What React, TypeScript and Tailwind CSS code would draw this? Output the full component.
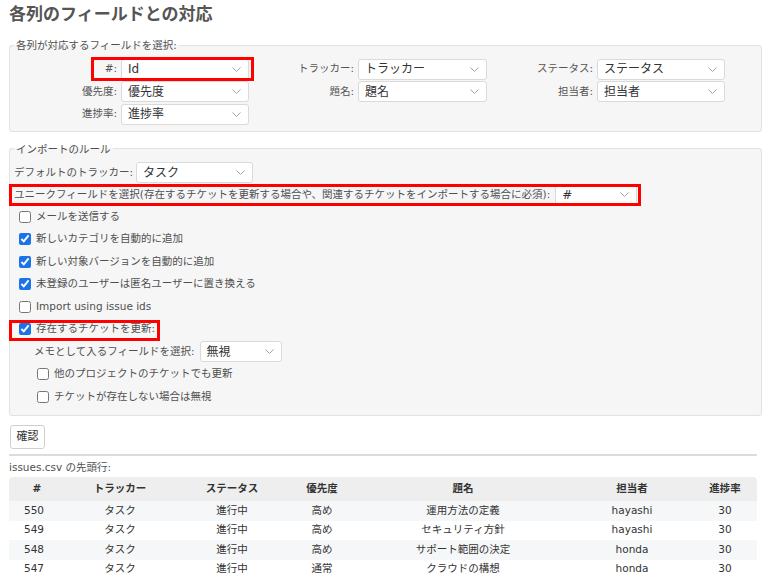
import React from 'react';

const font = '"DejaVu Sans", "Noto Sans CJK JP", sans-serif';

function Chevron() {
  return (
    <svg width="9" height="5" viewBox="0 0 9 5" className="shrink-0">
      <path d="M0.5 0.5 L4.5 4.5 L8.5 0.5" fill="none" stroke="#a3a3a3" strokeWidth="1" />
    </svg>
  );
}

function Select({ value, width }: { value: string; width: string }) {
  return (
    <div
      className={`flex h-[21px] items-center justify-between rounded-[3px] border border-[#dadada] bg-white pl-[6px] pr-[7px] text-[12px] text-[#333] ${width}`}
    >
      <span>{value}</span>
      <Chevron />
    </div>
  );
}

// 赤枠（注釈）
function RedBox({ className }: { className: string }) {
  return <div className={`pointer-events-none absolute border-[3px] border-[#f00] ${className}`} />;
}

function Label({ children }: { children: React.ReactNode }) {
  return <div className="pr-[4px] text-right text-[10.5px] text-[#555]">{children}</div>;
}

function Check({ label, checked }: { label: string; checked?: boolean }) {
  return (
    <label className="flex items-center">
      <input type="checkbox" defaultChecked={checked} className="h-[12px] w-[12px] accent-[#1a73e8]" />
      <span className="ml-[5px]">{label}</span>
    </label>
  );
}

const rows = [
  ['550', 'タスク', '進行中', '高め', '運用方法の定義', 'hayashi', '30'],
  ['549', 'タスク', '進行中', '高め', 'セキュリティ方針', 'hayashi', '30'],
  ['548', 'タスク', '進行中', '高め', 'サポート範囲の決定', 'honda', '30'],
  ['547', 'タスク', '進行中', '通常', 'クラウドの構想', 'honda', '30'],
];

export default function App() {
  return (
    <div className="min-h-[577px] bg-white pl-[9px] pr-[6px] text-[10.5px] text-[#505050]" style={{ fontFamily: font }}>
      <h2 className="pt-[3px] text-[17px] font-bold leading-[22px] text-[#555]">各列のフィールドとの対応</h2>

      {/* フィールド対応 */}
      <fieldset className="mt-[13px] rounded-[3px] border border-[#e2e2e2] bg-[#f6f6f6]">
        <legend className="ml-[4px] px-[2px] leading-[14px] text-[#505050]">各列が対応するフィールドを選択:</legend>
        <div className="grid grid-cols-[111px_128px_109px_129px_110px_128px] auto-rows-[22.5px] items-center pt-[6px] pb-[5px]">
          <Label>#:</Label>
          <div className="relative">
            <Select value="Id" width="w-[128px]" />
            <RedBox className="-left-[30px] -right-[5px] -top-[2px] -bottom-[1px]" />
          </div>
          <Label>トラッカー:</Label>
          <Select value="トラッカー" width="w-[129px]" />
          <Label>ステータス:</Label>
          <Select value="ステータス" width="w-[128px]" />

          <Label>優先度:</Label>
          <Select value="優先度" width="w-[128px]" />
          <Label>題名:</Label>
          <Select value="題名" width="w-[129px]" />
          <Label>担当者:</Label>
          <Select value="担当者" width="w-[128px]" />

          <Label>進捗率:</Label>
          <Select value="進捗率" width="w-[128px]" />
        </div>
      </fieldset>

      {/* インポートのルール */}
      <fieldset className="mt-[10px] rounded-[3px] border border-[#e2e2e2] bg-[#f6f6f6]">
        <legend className="ml-[4px] px-[2px] leading-[14px] text-[#505050]">インポートのルール</legend>
        <div className="pl-[4px] pt-[6px] pb-[7px]">
          <div className="flex h-[22px] items-center gap-[3px]">
            <span>デフォルトのトラッカー:</span>
            <Select value="タスク" width="w-[117px]" />
          </div>
          <div className="flex h-[22px] items-center">
            <div className="relative flex h-[22px] items-center gap-[5px]">
              <span>ユニークフィールドを選択(存在するチケットを更新する場合や、関連するチケットをインポートする場合に必須):</span>
              <Select value="#" width="w-[82px]" />
              <RedBox className="-left-[5px] -right-[4px] top-0 bottom-0" />
            </div>
          </div>

          <div className="flex flex-col pl-[5px] [&>*]:h-[22.5px]">
            <Check label="メールを送信する" />
            <Check label="新しいカテゴリを自動的に追加" checked />
            <Check label="新しい対象バージョンを自動的に追加" checked />
            <Check label="未登録のユーザーは匿名ユーザーに置き換える" checked />
            <Check label="Import using issue ids" />
            <div className="flex items-center">
              <div className="relative flex h-full items-center pr-[2px]">
                <Check label="存在するチケットを更新:" checked />
                <RedBox className="-left-[10px] -right-[3px] top-[1.5px] bottom-0" />
              </div>
            </div>
            <div className="flex items-center gap-[5px] pl-[15px]">
              <span>メモとして入るフィールドを選択:</span>
              <Select value="無視" width="w-[82px]" />
            </div>
            <div className="flex items-center pl-[18px]">
              <Check label="他のプロジェクトのチケットでも更新" />
            </div>
            <div className="flex items-center pl-[18px]">
              <Check label="チケットが存在しない場合は無視" />
            </div>
          </div>
        </div>
      </fieldset>

      <button className="ml-[1px] mt-[9px] h-[24px] w-[35px] rounded-[3px] border border-[#cfcfcf] bg-white text-[11px] text-[#333]">
        確認
      </button>

      <hr className="mt-[5px] mr-[5px] border-t-2 border-[#dcdcdc]" />

      <p className="mt-[4px] leading-[14px]">issues.csv の先頭行:</p>

      <div className="mt-[3px] w-[748px] overflow-hidden rounded-t-[4px]">
        <table className="w-full table-fixed border-collapse text-[10.5px] text-[#333]">
          <colgroup>
            <col className="w-[56px]" />
            <col className="w-[110px]" />
            <col className="w-[114px]" />
            <col className="w-[66px]" />
            <col className="w-[216px]" />
            <col className="w-[122px]" />
            <col className="w-[64px]" />
          </colgroup>
          <thead>
            <tr className="h-[24px] bg-[#eeeeee]">
              {['#', 'トラッカー', 'ステータス', '優先度', '題名', '担当者', '進捗率'].map((h) => (
                <th key={h} className="font-bold">
                  {h}
                </th>
              ))}
            </tr>
          </thead>
          <tbody>
            {rows.map((r, i) => (
              <tr key={r[0]} className={i % 2 === 0 ? 'h-[19.5px] bg-[#f6f7f8]' : 'h-[19.5px] bg-white'}>
                {r.map((c, j) => (
                  <td key={j} className={j === 0 ? 'pr-[6px] text-center' : 'text-center'}>
                    {c}
                  </td>
                ))}
              </tr>
            ))}
          </tbody>
        </table>
      </div>
    </div>
  );
}
